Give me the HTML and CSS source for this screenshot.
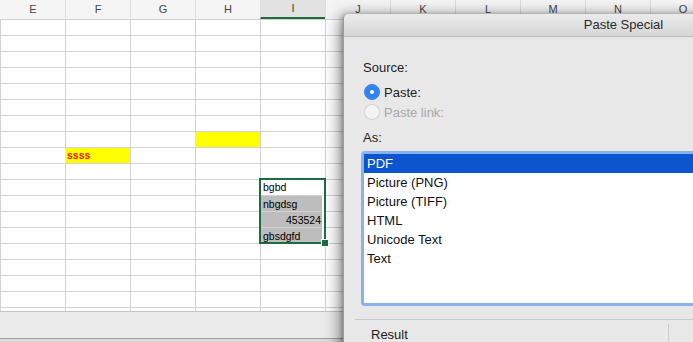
FILE: index.html
```html
<!DOCTYPE html>
<html>
<head>
  <meta charset="UTF-8">
  <title>Paste Special</title>
  <link rel="stylesheet" href="styles.css">
</head>
<body>

  <div class="sheet">
    <div class="colHeads">
      <div class="colHead">E</div>
      <div class="colHead">F</div>
      <div class="colHead">G</div>
      <div class="colHead">H</div>
      <div class="colHead active">I</div>
      <div class="colHead">J</div>
      <div class="colHead">K</div>
      <div class="colHead">L</div>
      <div class="colHead">M</div>
      <div class="colHead">N</div>
      <div class="colHead">O</div>
    </div>

    <div class="cells">
      <div class="cell yellow cellH8"></div>
      <div class="cell yellow red cellF9">ssss</div>

      <div class="selection">
        <div class="selRow">bgbd</div>
        <div class="selRow grey">nbgdsg</div>
        <div class="selRow grey num">453524</div>
        <div class="selRow grey">gbsdgfd</div>
        <span class="fillHandle"></span>
      </div>
    </div>

    <div class="sheetFoot"></div>
  </div>

  <div class="dialog">
    <div class="titleBar">Paste Special</div>
    <div class="dialogBody">
      <div class="label source">Source:</div>

      <div class="radioRow firstRadio">
        <span class="radio on"></span>
        <span>Paste:</span>
      </div>
      <div class="radioRow disabled">
        <span class="radio"></span>
        <span>Paste link:</span>
      </div>

      <div class="label as">As:</div>

      <div class="listBox">
        <div class="listItem selected">PDF</div>
        <div class="listItem">Picture (PNG)</div>
        <div class="listItem">Picture (TIFF)</div>
        <div class="listItem">HTML</div>
        <div class="listItem">Unicode Text</div>
        <div class="listItem">Text</div>
      </div>

      <div class="resultRow">
        <div class="resultLabel">Result</div>
        <div class="resultBox"></div>
      </div>
    </div>
  </div>

</body>
</html>
```

FILE: styles.css
```css
* {
  box-sizing: border-box; }
html, body {
  margin: 0;
  height: 100%;
  overflow: hidden; }
body {
  position: relative;
  background: #dcdcdc;
  font-family: "Liberation Sans", Arial, sans-serif; }

/* spreadsheet */
.sheet {
  width: 693px; }
.colHeads {
  display: flex;
  height: 19px;
  background: #f5f5f5; }
.colHead {
  flex: 0 0 65px;
  border-left: 1px solid #dedede;
  font-size: 11px;
  line-height: 18px;
  text-align: center;
  color: #444; }
.colHead:first-child {
  border-left-color: #f5f5f5; }
.colHead.active {
  background: #e2e2e2;
  border-bottom: 2px solid #1e6b3d;
  line-height: 17px; }

.cells {
  display: grid;
  grid-template-columns: repeat(11, 65px);
  grid-template-rows: repeat(19, 16px);
  height: 293px;
  overflow: hidden;
  background-color: #fff;
  background-image:
    linear-gradient(to right, #d2d2d2 1px, transparent 1px),
    linear-gradient(to bottom, #d2d2d2 1px, transparent 1px);
  background-size: 65px 16px;
  border-bottom: 1px solid #c4c4c4;
  font-size: 10.5px; }
.cell {
  padding-left: 2px;
  line-height: 17px; }
.yellow {
  background: #ffff00;
  border-top: 1px solid #d2d2d2; }
.red {
  color: #e8141b;
  font-weight: bold;
  line-height: 15px; }
.cellH8 {
  grid-column: 4;
  grid-row: 8; }
.cellF9 {
  grid-column: 2;
  grid-row: 9; }

.selection {
  grid-column: 5;
  grid-row: 11 / span 4;
  position: relative;
  z-index: 1;
  outline: 2px solid #1f6a3f;
  outline-offset: -1px;
  background: #fff;
  padding: 1px 3px 1px 1px; }
.selRow {
  height: 16px;
  padding-left: 2px;
  line-height: 16px;
  color: #000; }
.selRow:first-child {
  height: 15px;
  line-height: 15px; }
.selRow.grey {
  background: #bdbdbd;
  border-top: 1px solid #d0d0d0; }
.selRow.num {
  text-align: right;
  padding-right: 1px; }
.fillHandle {
  position: absolute;
  right: -4px;
  bottom: -4px;
  width: 6px;
  height: 6px;
  background: #1f6a3f;
  border: 1px solid #fff;
  box-sizing: content-box; }

.sheetFoot {
  height: 27px;
  background: #ebebeb;
  border-bottom: 1px solid #9d9d9d; }

/* dialog */
.dialog {
  position: absolute;
  left: 343px;
  top: 14px;
  width: 560px;
  height: 360px;
  background: #e8e8e8;
  border-left: 1px solid #9c9c9c;
  border-radius: 5px 5px 0 0;
  box-shadow: -3px 2px 16px rgba(0, 0, 0, 0.5), -1px 0 4px rgba(0, 0, 0, 0.2);
  color: #1d1d1d;
  font-size: 13px;
  z-index: 5; }
.titleBar {
  height: 23px;
  line-height: 22px;
  text-align: center;
  color: #2a2a2a;
  border-radius: 5px 5px 0 0;
  background: linear-gradient(#ebebeb, #d6d6d6);
  border-bottom: 1px solid #b9b9b9; }
.dialogBody {
  padding: 0 0 0 19px; }
.label {
  height: 16px;
  line-height: 16px; }
.label.source {
  margin-top: 23px; }
.label.as {
  margin-top: 8px; }

.radioRow {
  display: flex;
  align-items: center;
  gap: 4px;
  height: 20px; }
.radioRow.firstRadio {
  margin-top: 6px; }
.radio {
  width: 16px;
  height: 16px;
  margin-left: 1px;
  border-radius: 50%;
  background: #fff;
  border: 1px solid #c9c9c9; }
.radio.on {
  background: #2f82f4;
  border-color: #2a78e4;
  box-shadow: inset 0 0 0 5px #2f82f4, inset 0 0 0 8px #fff; }
.radioRow.disabled {
  color: #a9a9a9; }
.radioRow.disabled .radio {
  border-color: #d4d4d4;
  background: #f3f3f3; }

.listBox {
  margin: 5px 0 0 -2px;
  height: 155px;
  border: 3px solid #8ab2ee;
  border-radius: 4px;
  background: #fff; }
.listItem {
  height: 19px;
  line-height: 19px;
  padding-left: 3px;
  color: #111; }
.listItem.selected {
  background: #0b55cf;
  color: #fff; }

.resultRow {
  display: flex;
  margin: 13px 0 0 -8px;
  border-top: 1px solid #c9c9c9;
  height: 40px; }
.resultLabel {
  width: 313px;
  padding: 7px 0 0 16px; }
.resultBox {
  margin-top: 4px;
  border-left: 1px solid #cdcdcd; }
```
